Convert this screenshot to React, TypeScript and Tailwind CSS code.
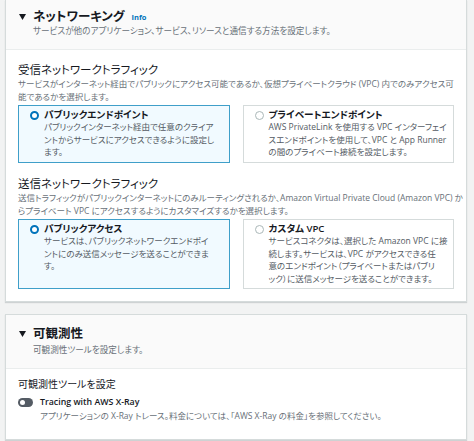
import React from "react";

const font = { fontFamily: '"Open Sans", "Noto Sans CJK JP", sans-serif' };

function Caret() {
  return (
    <svg width="7" height="6" viewBox="0 0 7 6" className="shrink-0">
      <polygon points="0,0 7,0 3.5,6" fill="#16191f" />
    </svg>
  );
}

function Radio({ checked }: { checked: boolean }) {
  return checked ? (
    <span className="mt-[2px] box-border block h-[9px] w-[9px] shrink-0 rounded-full border-[2.5px] border-[#0073bb] bg-white" />
  ) : (
    <span className="mt-[2px] box-border block h-[9px] w-[9px] shrink-0 rounded-full border border-[#aab7b8] bg-white" />
  );
}

function Lines({ lines, className }: { lines: string[]; className: string }) {
  return (
    <div className={className}>
      {lines.map((l, i) => (
        <div key={i} className="whitespace-nowrap">
          {l}
        </div>
      ))}
    </div>
  );
}

function Tile({
  checked,
  title,
  lines,
}: {
  checked: boolean;
  title: string;
  lines: string[];
}) {
  return (
    <div
      className={
        checked
          ? "flex gap-[5px] border border-[#3f9fc9] bg-[#f1faff] pl-[11px] pr-[8px] pt-[3px] pb-[3px]"
          : "flex gap-[5px] border border-[#d5dbdb] bg-white pl-[11px] pr-[8px] pt-[3px] pb-[3px]"
      }
    >
      <Radio checked={checked} />
      <div className="min-w-0">
        <div className="text-[9.6px] font-semibold leading-[12px] text-[#16191f]">{title}</div>
        <Lines className="text-[8.5px] leading-[12.5px] text-[#545b64]" lines={lines} />
      </div>
    </div>
  );
}

export default function App() {
  return (
    <div
      className="h-[441px] w-[474px] overflow-hidden bg-[#f2f3f3] pl-[5px] pr-[7px] [font-feature-settings:'palt']"
      style={font}
    >
      {/* Networking card */}
      <div className="border-x border-b border-[#d5dbdb] bg-white shadow-[0_1px_1px_rgba(0,28,36,0.15)]">
        <div className="h-[50px] border-b border-[#eaeded] bg-[#fafafa] pl-[13px] pt-[8px]">
          <div className="flex items-center gap-[7px]">
            <Caret />
            <span className="text-[12.5px] font-bold leading-[18px] text-[#16191f]">ネットワーキング</span>
            <span className="mt-[2px] text-[7.5px] font-bold text-[#0073bb]">Info</span>
          </div>
          <div className="pl-[14px] text-[8.6px] leading-[11px] text-[#687078]">
            サービスが他のアプリケーション、サービス、リソースと通信する方法を設定します。
          </div>
        </div>
        <div className="px-[12px] pt-[13px] pb-[12px]">
          <div className="text-[11.5px] leading-[14px] text-[#16191f]">受信ネットワークトラフィック</div>
          <Lines
            className="text-[8.5px] leading-[13px] text-[#687078]"
            lines={[
              "サービスがインターネット経由でパブリックにアクセス可能であるか、仮想プライベートクラウド (VPC) 内でのみアクセス可",
              "能であるかを選択します。",
            ]}
          />
          <div className="mt-[2px] grid grid-cols-2 gap-[13px]">
            <Tile
              checked
              title="パブリックエンドポイント"
              lines={[
                "パブリックインターネット経由で任意のクライア",
                "ントからサービスにアクセスできるように設定し",
                "ます。",
              ]}
            />
            <Tile
              checked={false}
              title="プライベートエンドポイント"
              lines={[
                "AWS PrivateLink を使用する VPC インターフェイ",
                "スエンドポイントを使用して、VPC と App Runner",
                "の間のプライベート接続を設定します。",
              ]}
            />
          </div>
          <div className="mt-[14px] text-[11.5px] leading-[14px] text-[#16191f]">送信ネットワークトラフィック</div>
          <Lines
            className="text-[8.5px] leading-[13px] text-[#687078]"
            lines={[
              "送信トラフィックがパブリックインターネットにのみルーティングされるか、Amazon Virtual Private Cloud (Amazon VPC) か",
              "らプライベート VPC にアクセスするようにカスタマイズするかを選択します。",
            ]}
          />
          <div className="mt-[2.5px] grid grid-cols-2 gap-[13px]">
            <Tile
              checked
              title="パブリックアクセス"
              lines={[
                "サービスは、パブリックネットワークエンドポイ",
                "ントにのみ送信メッセージを送ることができま",
                "す。",
              ]}
            />
            <Tile
              checked={false}
              title="カスタム VPC"
              lines={[
                "サービスコネクタは、選択した Amazon VPC に接",
                "続します。サービスは、VPC がアクセスできる任",
                "意のエンドポイント（プライベートまたはパブリ",
                "ック）に送信メッセージを送ることができます。",
              ]}
            />
          </div>
        </div>
      </div>

      {/* Observability card */}
      <div className="mt-[12px] border border-[#d5dbdb] bg-white shadow-[0_1px_1px_rgba(0,28,36,0.15)]">
        <div className="h-[54px] border-b border-[#eaeded] bg-[#fafafa] pl-[13px] pt-[10px]">
          <div className="flex items-center gap-[7px]">
            <Caret />
            <span className="text-[12.5px] font-bold leading-[18px] text-[#16191f]">可観測性</span>
          </div>
          <div className="pl-[14px] text-[8.6px] leading-[14px] text-[#687078]">
            可観測性ツールを設定します。
          </div>
        </div>
        <div className="px-[12px] pt-[8px] pb-[17px]">
          <div className="text-[10px] leading-[14px] text-[#16191f]">可観測性ツールを設定</div>
          <div className="mt-[5px] flex gap-[7px]">
            <span className="relative mt-[2px] block h-[9px] w-[15px] shrink-0 rounded-full bg-[#545b64]">
              <span className="absolute left-[2px] top-[2px] block h-[5px] w-[5px] rounded-full bg-white" />
            </span>
            <div>
              <div className="text-[8.8px] font-semibold leading-[13px] text-[#16191f]">Tracing with AWS X-Ray</div>
              <div className="text-[8.5px] leading-[13px] text-[#687078]">
                アプリケーションの X-Ray トレース。料金については、「AWS X-Ray の料金」を参照してください。
              </div>
            </div>
          </div>
        </div>
      </div>
    </div>
  );
}
